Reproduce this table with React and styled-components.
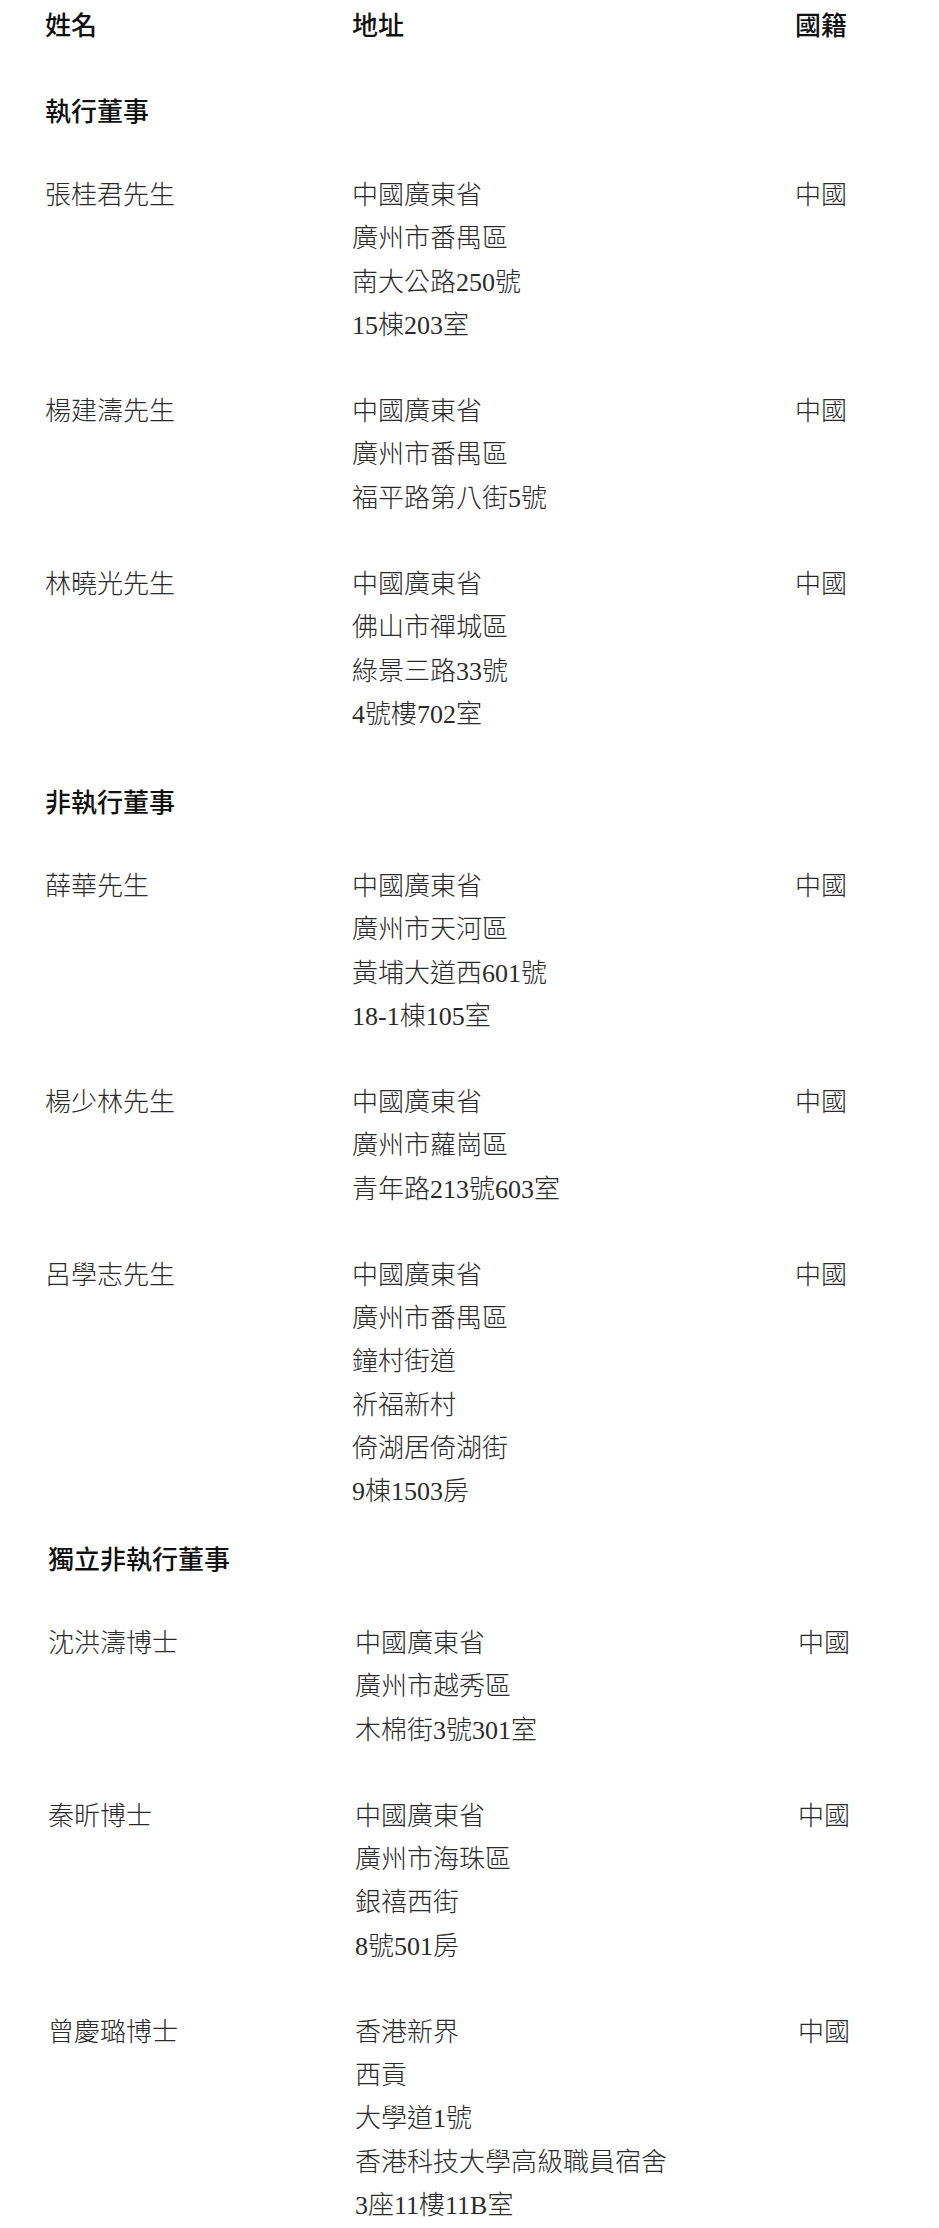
import React from 'react';
import styled, { createGlobalStyle } from 'styled-components';

const GlobalStyle = createGlobalStyle`
  html, body {
    margin: 0;
    padding: 0;
    background: #ffffff;
  }
`;

const Page = styled.div`
  width: 939px;
  padding: 2px 0 0 45px;
  box-sizing: border-box;
  color: #1e1e1e;
`;

const Grid = styled.div`
  display: grid;
  grid-template-columns: 307px 443px 1fr;
  margin-bottom: ${({ gap }) => gap}px;
`;

const HeadCell = styled.div`
  font-family: "Noto Sans CJK TC", "Noto Sans", sans-serif;
  font-weight: 500;
  font-size: 26px;
  line-height: 43.35px;
  color: #111;
`;

const SectionTitle = styled.h2`
  margin: 0 0 ${({ gap }) => gap}px ${({ shift }) => shift || 0}px;
  font-family: "Noto Sans CJK TC", "Noto Sans", sans-serif;
  font-weight: 500;
  font-size: 26px;
  line-height: 43.35px;
  color: #111;
`;

const Cell = styled.div`
  font-family: "Liberation Serif", "Noto Sans CJK TC", serif;
  font-weight: 300;
  font-size: 26px;
  line-height: 43.35px;
  color: #2a2a2a;
  padding-left: ${({ shift }) => shift || 0}px;
`;

const Line = styled.div`
  white-space: nowrap;
`;

const sections = [
  {
    title: '執行董事',
    rows: [
      { name: '張桂君先生', address: ['中國廣東省', '廣州市番禺區', '南大公路250號', '15棟203室'] },
      { name: '楊建濤先生', address: ['中國廣東省', '廣州市番禺區', '福平路第八街5號'] },
      { name: '林曉光先生', address: ['中國廣東省', '佛山市禪城區', '綠景三路33號', '4號樓702室'] },
    ],
  },
  {
    title: '非執行董事',
    rows: [
      { name: '薛華先生', address: ['中國廣東省', '廣州市天河區', '黃埔大道西601號', '18-1棟105室'] },
      { name: '楊少林先生', address: ['中國廣東省', '廣州市蘿崗區', '青年路213號603室'] },
      {
        name: '呂學志先生',
        address: ['中國廣東省', '廣州市番禺區', '鐘村街道', '祈福新村', '倚湖居倚湖街', '9棟1503房'],
        gap: 22,
      },
    ],
  },
  {
    title: '獨立非執行董事',
    shift: 3,
    rows: [
      { name: '沈洪濤博士', address: ['中國廣東省', '廣州市越秀區', '木棉街3號301室'] },
      { name: '秦昕博士', address: ['中國廣東省', '廣州市海珠區', '銀禧西街', '8號501房'] },
      {
        name: '曾慶璐博士',
        address: ['香港新界', '西貢', '大學道1號', '香港科技大學高級職員宿舍', '3座11樓11B室'],
      },
    ],
  },
];

const GAP = 42.7;

const App = () => (
  <>
    <GlobalStyle />
    <Page>
      <Grid gap={GAP}>
        <HeadCell>姓名</HeadCell>
        <HeadCell>地址</HeadCell>
        <HeadCell>國籍</HeadCell>
      </Grid>
      {sections.map(section => (
        <section key={section.title}>
          <SectionTitle gap={GAP} shift={section.shift}>{section.title}</SectionTitle>
          {section.rows.map(row => (
            <Grid key={row.name} gap={row.gap || GAP}>
              <Cell shift={section.shift}>{row.name}</Cell>
              <Cell shift={section.shift}>
                {row.address.map(line => <Line key={line}>{line}</Line>)}
              </Cell>
              <Cell shift={section.shift}>中國</Cell>
            </Grid>
          ))}
        </section>
      ))}
    </Page>
  </>
);

export default App;
